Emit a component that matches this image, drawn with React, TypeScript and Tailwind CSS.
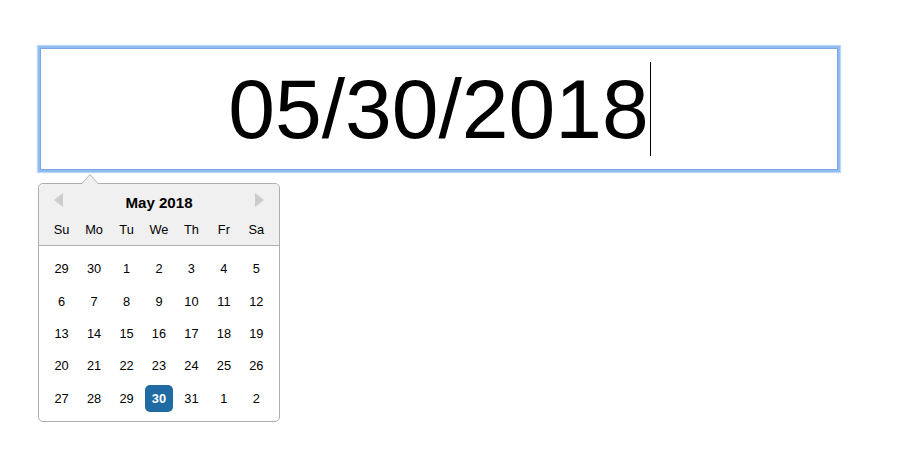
import React from 'react';

const dayNames = ['Su', 'Mo', 'Tu', 'We', 'Th', 'Fr', 'Sa'];

const weeks: number[][] = [
  [29, 30, 1, 2, 3, 4, 5],
  [6, 7, 8, 9, 10, 11, 12],
  [13, 14, 15, 16, 17, 18, 19],
  [20, 21, 22, 23, 24, 25, 26],
  [27, 28, 29, 30, 31, 1, 2],
];

const Calendar: React.FC = () => {
  return (
    <div className="relative w-[242px] rounded-[5px] border border-[#aeaeae] bg-white text-[12.8px] text-black">
      {/* pointer triangle */}
      <div className="absolute left-[43px] top-[-10px] h-0 w-0 border-x-[8px] border-b-[9px] border-x-transparent border-b-[#aeaeae]" />
      <div className="absolute left-[43px] top-[-9px] z-10 h-0 w-0 border-x-[8px] border-b-[9px] border-x-transparent border-b-[#f0f0f0]" />

      <div className="rounded-t-[5px] border-b border-[#aeaeae] bg-[#f0f0f0]">
        <div className="flex h-[29px] items-start justify-between px-[15px] pt-[9px]">
          <button className="h-0 w-0 border-y-[7px] border-r-[9px] border-y-transparent border-r-[#cccccc]" />
          <div className="mt-px text-[15.1px] font-bold leading-[17px]">May 2018</div>
          <button className="h-0 w-0 border-y-[7px] border-l-[9px] border-y-transparent border-l-[#cccccc]" />
        </div>
        <div className="grid h-[32px] grid-cols-7 items-center px-[6.4px]">
          {dayNames.map((d) => (
            <div key={d} className="text-center leading-[27px]">
              {d}
            </div>
          ))}
        </div>
      </div>

      <div className="m-[6.4px]">
        {weeks.map((week, wi) => (
          <div key={wi} className="flex">
            {week.map((day, di) => {
              const selected = wi === 4 && day === 30;
              return (
                <div
                  key={di}
                  className={
                    selected
                      ? 'm-[2.65px] h-[27.2px] w-[27.2px] rounded-[5px] bg-[#216ba5] text-center font-bold leading-[27.2px] text-white'
                      : 'm-[2.65px] h-[27.2px] w-[27.2px] text-center leading-[27.2px]'
                  }
                >
                  {day}
                </div>
              );
            })}
          </div>
        ))}
      </div>
    </div>
  );
};

export default function App() {
  return (
    <div className="min-h-[469px] bg-white pl-[38px] pt-[46px]" style={{ fontFamily: '"Liberation Sans", Arial, sans-serif' }}>
      <div className="flex h-[126px] w-[802px] items-center justify-center border-2 border-[#8fbcf3] bg-white shadow-[0_0_1px_1px_#bcd8fa,inset_0_0_0_1px_#7ba7de]">
        <span className="pl-px text-[84px] leading-none text-black">05/30/2018</span>
        <span className="ml-px h-[94px] w-px bg-black" />
      </div>
      <div className="mt-[11px]">
        <Calendar />
      </div>
    </div>
  );
}
